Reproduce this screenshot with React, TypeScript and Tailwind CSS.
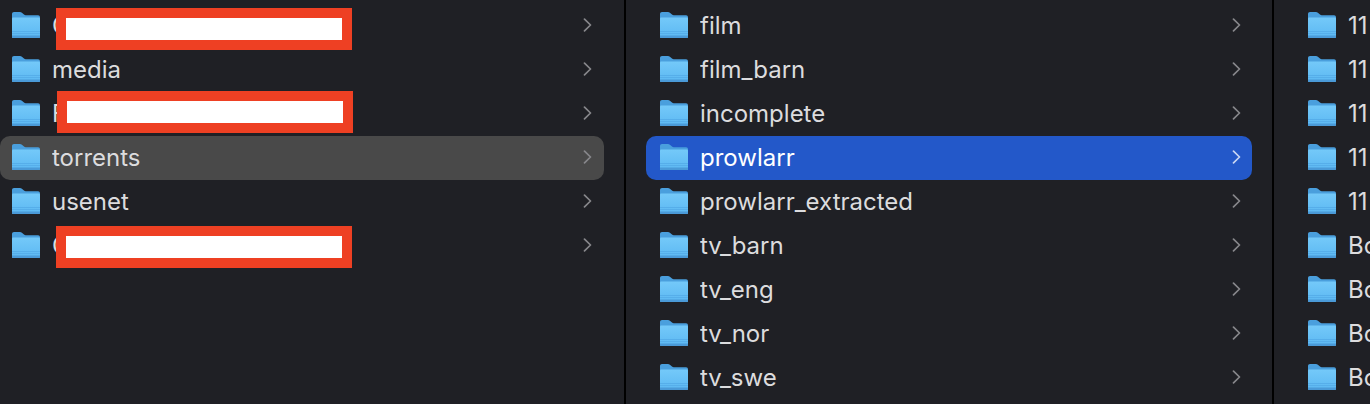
import React from "react";

type Row = { name: string; state?: "active" | "inactive" };

const FolderIcon: React.FC<{ id: string }> = ({ id }) => (
  <svg width="28" height="26" viewBox="0 0 28 26" className="mb-0.5 shrink-0">
    <defs>
      <linearGradient id={`front-${id}`} x1="0" y1="0" x2="0" y2="1">
        <stop offset="0" stopColor="#74c9f9" />
        <stop offset="1" stopColor="#5cb8f2" />
      </linearGradient>
    </defs>
    <path d="M0 2C0 .8.8 0 2 0h5.800c1 0 1.600.3 2.400 1l1.800 1.600c.5.5 1 .7 1.800.7h12.300C27.200 3.300 28 4.100 28 5.200V24.500c0 .9-.6 1.500-1.500 1.500h-25C.6 26 0 25.400 0 24.500Z" fill="#4a9fdd" />
    <path d="M0 6.800C0 6 .6 5.500 1.400 5.500h25.200c.8 0 1.400.5 1.400 1.300V24.500c0 .9-.6 1.500-1.500 1.500h-25C.6 26 0 25.400 0 24.500Z" fill={`url(#front-${id})`} />
    <rect x="0" y="19" width="28" height="1" fill="#56aeea" />
    <rect x="0" y="21" width="28" height="1" fill="#56aeea" />
    <path d="M0 23.500h28v1c0 .9-.6 1.500-1.500 1.500h-25C.6 26 0 25.400 0 24.500Z" fill="#4a9ad8" />
  </svg>
);

const Chevron: React.FC<{ bright?: boolean }> = ({ bright }) => (
  <svg width="9" height="14" viewBox="0 0 9 14" className="mb-0.5 shrink-0">
    <path
      d="M1.500 1.200 7.500 7 1.500 12.800"
      fill="none"
      stroke={bright ? "#c9d6f2" : "#87878b"}
      strokeWidth="1.700"
      strokeLinecap="round"
      strokeLinejoin="round"
    />
  </svg>
);

// 컬럼 하나: 폴더 행 목록
const Column: React.FC<{ rows: Row[]; className: string; rowClass: string; prefix: string }> = ({
  rows,
  className,
  rowClass,
  prefix,
}) => (
  <div className={`flex flex-col pt-1 ${className}`}>
    {rows.map((row, i) => (
      <div
        key={i}
        className={`flex h-11 shrink-0 items-center rounded-[10px] ${rowClass} ${
          row.state === "active" ? "bg-[#2358c9] text-white" : row.state === "inactive" ? "bg-[#494949]" : ""
        }`}
      >
        <FolderIcon id={`${prefix}-${i}`} />
        <span className="ml-3 min-w-0 flex-1 truncate">{row.name}</span>
        <Chevron bright={row.state === "active"} />
      </div>
    ))}
  </div>
);

const first: Row[] = [
  { name: "C" },
  { name: "media" },
  { name: "F" },
  { name: "torrents", state: "inactive" },
  { name: "usenet" },
  { name: "C" },
];

const second: Row[] = [
  { name: "film" },
  { name: "film_barn" },
  { name: "incomplete" },
  { name: "prowlarr", state: "active" },
  { name: "prowlarr_extracted" },
  { name: "tv_barn" },
  { name: "tv_eng" },
  { name: "tv_nor" },
  { name: "tv_swe" },
];

const third: Row[] = ["11", "11", "11", "11", "11", "Bo", "Bo", "Bo", "Bo"].map((name) => ({ name }));

const Redaction: React.FC<{ className: string }> = ({ className }) => (
  <div className={`absolute h-[42px] w-[296px] border-[10px] border-[#ee4023] bg-white ${className}`} />
);

export default function App() {
  return (
    <div className="relative flex h-[404px] w-[1370px] overflow-hidden bg-[#1f2025] font-['Inter','Liberation_Sans',sans-serif] text-[24px] text-[#dcdcde]">
      <Column prefix="a" rows={first} className="w-[624px] shrink-0 pr-5" rowClass="pl-3 pr-3" />
      <div className="w-0.5 shrink-0 bg-black" />
      <Column prefix="b" rows={second} className="w-[646px] shrink-0 px-5" rowClass="pl-3.5 pr-[11px]" />
      <div className="w-0.5 shrink-0 bg-black" />
      <Column prefix="c" rows={third} className="w-[646px] shrink-0 px-5" rowClass="pl-3.5 pr-[11px]" />

      <Redaction className="left-14 top-2" />
      <Redaction className="left-[57px] top-[91px]" />
      <Redaction className="left-14 top-[226px]" />
    </div>
  );
}
